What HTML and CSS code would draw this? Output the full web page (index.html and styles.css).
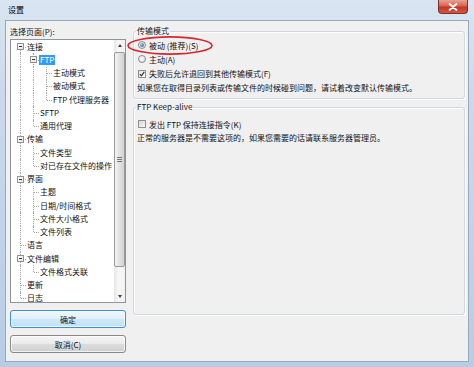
FILE: index.html
```html
<!DOCTYPE html>
<html lang="zh-CN">
<head>
<meta charset="utf-8">
<title>设置</title>
<link rel="stylesheet" href="styles.css">
</head>
<body>
<div class="window">
  <div class="titlebar">
    <span class="title">设置</span>
    <span class="close"><svg width="10" height="8" viewBox="0 0 10 8"><path d="M1.5 1 L8.5 7 M8.5 1 L1.5 7" stroke="#fff" stroke-width="1.8" stroke-linecap="round"/></svg></span>
  </div>
  <div class="client">
    <div class="left">
      <div class="pick-label">选择页面(P):</div>
      <div class="tree">
        <ul class="nodes">
          <li class="row"><span class="g bx first"><i class="pm"></i></span><span class="lbl">连接</span></li>
          <li class="row"><span class="g v"></span><span class="g bx"><i class="pm"></i></span><span class="lbl sel">FTP</span></li>
          <li class="row"><span class="g v"></span><span class="g v"></span><span class="g t"></span><span class="lbl">主动模式</span></li>
          <li class="row"><span class="g v"></span><span class="g v"></span><span class="g t"></span><span class="lbl">被动模式</span></li>
          <li class="row"><span class="g v"></span><span class="g v"></span><span class="g l"></span><span class="lbl">FTP 代理服务器</span></li>
          <li class="row"><span class="g v"></span><span class="g t"></span><span class="lbl">SFTP</span></li>
          <li class="row"><span class="g v"></span><span class="g l"></span><span class="lbl">通用代理</span></li>
          <li class="row"><span class="g bx"><i class="pm"></i></span><span class="lbl">传输</span></li>
          <li class="row"><span class="g v"></span><span class="g t"></span><span class="lbl">文件类型</span></li>
          <li class="row"><span class="g v"></span><span class="g l"></span><span class="lbl">对已存在文件的操作</span></li>
          <li class="row"><span class="g bx"><i class="pm"></i></span><span class="lbl">界面</span></li>
          <li class="row"><span class="g v"></span><span class="g t"></span><span class="lbl">主题</span></li>
          <li class="row"><span class="g v"></span><span class="g t"></span><span class="lbl">日期/时间格式</span></li>
          <li class="row"><span class="g v"></span><span class="g t"></span><span class="lbl">文件大小格式</span></li>
          <li class="row"><span class="g v"></span><span class="g l"></span><span class="lbl">文件列表</span></li>
          <li class="row"><span class="g t"></span><span class="lbl">语言</span></li>
          <li class="row"><span class="g bx"><i class="pm"></i></span><span class="lbl">文件编辑</span></li>
          <li class="row"><span class="g v"></span><span class="g l"></span><span class="lbl">文件格式关联</span></li>
          <li class="row"><span class="g t"></span><span class="lbl">更新</span></li>
          <li class="row"><span class="g l"></span><span class="lbl">日志</span></li>
        </ul>
        <div class="scrollbar">
          <div class="sb-btn"><span class="arrow up"></span></div>
          <div class="sb-track"><div class="sb-thumb"><span class="grip"></span></div></div>
          <div class="sb-btn"><span class="arrow down"></span></div>
        </div>
      </div>
      <button class="btn default">确定</button>
      <button class="btn">取消(C)</button>
    </div>
    <div class="right">
      <fieldset class="group g1">
        <legend>传输模式</legend>
        <div class="opt"><span class="radio on"></span>被动 (推荐)(S)</div>
        <div class="opt"><span class="radio"></span>主动(A)</div>
        <div class="opt"><span class="check on"><svg width="6" height="6" viewBox="0 0 6 6"><path d="M0.8 3.2 L2.4 4.8 L5.3 0.9" fill="none" stroke="#253545" stroke-width="1.2"/></svg></span>失败后允许退回到其他传输模式(F)</div>
        <p class="note">如果您在取得目录列表或传输文件的时候碰到问题，请试着改变默认传输模式。</p>
      </fieldset>
      <fieldset class="group g2">
        <legend>FTP Keep-alive</legend>
        <div class="opt"><span class="check"></span>发出 FTP 保持连接指令(K)</div>
        <p class="note">正常的服务器是不需要这项的，如果您需要的话请联系服务器管理员。</p>
      </fieldset>
    </div>
  </div>
  <svg class="mark" width="90" height="22" viewBox="0 0 90 22"><ellipse cx="44" cy="10.5" rx="42" ry="8.6" fill="none" stroke="#d8262a" stroke-width="1.6"/></svg>
</div>
</body>
</html>
```
FILE: styles.css
```css
* { box-sizing: border-box; }
html, body { margin: 0; padding: 0; }
body {
  width: 474px;
  height: 367px;
  overflow: hidden;
  font-family: "Noto Sans CJK SC", "Noto Sans", sans-serif;
  font-size: 8px;
  color: #111;
}
.window {
  position: relative;
  width: 474px;
  height: 367px;
  display: flex;
  flex-direction: column;
  background: linear-gradient(180deg, #d9e5f1 0, #cbdaeb 25%, #b7cde5 100%);
}
.titlebar {
  height: 20px;
  flex: none;
  display: flex;
  justify-content: space-between;
  align-items: flex-start;
  padding: 0 6px 0 8px;
}
.title {
  line-height: 20px;
  font-size: 8px;
  color: #000;
}
.close {
  width: 30px;
  height: 14px;
  display: flex;
  align-items: center;
  justify-content: center;
  border: 1px solid #7a3128;
  border-top: none;
  border-radius: 0 0 4px 4px;
  background: linear-gradient(180deg, #eaa192 0, #d8634f 45%, #c2362a 55%, #d4553f 100%);
}
.client {
  flex: 1;
  margin: 0 5px 5px 5px;
  border: 1px solid #97a9bf;
  background: #f0f0f0;
  display: flex;
  gap: 7px;
  padding: 5px 3px 4px 4px;
}
.left {
  width: 116px;
  flex: none;
  display: flex;
  flex-direction: column;
}
.pick-label {
  height: 13px;
  line-height: 11px;
}
.tree {
  height: 264px;
  border: 1px solid #8f949b;
  background: #fff;
  display: flex;
}
.nodes {
  list-style: none;
  margin: 0;
  padding: 0 0 0 2px;
  flex: 1;
  overflow: hidden;
}
.row {
  display: flex;
  align-items: center;
  height: 13.25px;
  white-space: nowrap;
}
.g {
  position: relative;
  width: 13px;
  height: 100%;
  flex: none;
}
.g::before, .g::after { content: ""; position: absolute; }
.g.v::before, .g.t::before, .g.bx::before {
  left: 7px; top: 0; bottom: 0;
  border-left: 1px dotted #a8a8a8;
}
.g.bx.first::before { top: 50%; }
.g.l::before {
  left: 7px; top: 0; height: 50%;
  border-left: 1px dotted #a8a8a8;
}
.g.t::after, .g.l::after, .g.bx::after {
  left: 8px; right: 0; top: 50%;
  border-top: 1px dotted #a8a8a8;
}
.pm {
  position: absolute;
  left: 4px;
  top: 50%;
  margin-top: -3.5px;
  width: 7px;
  height: 7px;
  border: 1px solid #939393;
  background: linear-gradient(135deg, #fff, #e2e2e2);
  z-index: 1;
}
.pm::after {
  content: "";
  position: absolute;
  left: 1px;
  right: 1px;
  top: 2px;
  border-top: 1px solid #333;
}
.lbl {
  display: inline-block;
  line-height: 10px;
  padding: 0 1px;
}
.lbl.sel {
  background: #3399ff;
  color: #fff;
}
.scrollbar {
  width: 11px;
  flex: none;
  display: flex;
  flex-direction: column;
  background: linear-gradient(90deg, #e6e6e6, #f7f7f7 40%, #f1f1f1);
}
.sb-btn {
  height: 11px;
  display: flex;
  align-items: center;
  justify-content: center;
  flex: none;
}
.arrow {
  width: 0; height: 0;
  border-left: 2.5px solid transparent;
  border-right: 2.5px solid transparent;
}
.arrow.up { border-bottom: 3px solid #404040; }
.arrow.down { border-top: 3px solid #404040; }
.sb-track {
  flex: 1;
  padding-top: 1px;
}
.sb-thumb {
  height: 215px;
  border: 1px solid #9a9a9a;
  border-radius: 2px;
  background: linear-gradient(90deg, #f4f4f4, #e1e1e1 50%, #d2d2d2);
  display: flex;
  align-items: center;
  justify-content: center;
}
.grip {
  width: 5px;
  height: 5px;
  border-top: 1px solid #777;
  border-bottom: 1px solid #777;
  background: linear-gradient(#777, #777) center / 100% 1px no-repeat;
}
.btn {
  font: inherit;
  color: #111;
  height: 18px;
  margin: 7px 0 0 0;
  padding: 0;
  border-radius: 3px;
  border: 1px solid #8a8a8a;
  background: linear-gradient(180deg, #f6f6f6 0, #ebebeb 48%, #dcdcdc 52%, #d0d0d0 100%);
  box-shadow: inset 0 0 0 1px rgba(255,255,255,0.7);
}
.btn.default {
  border-color: #3c8fd0;
  background: linear-gradient(180deg, #eef7fd 0, #e0f0fb 48%, #cde8f8 52%, #c1e2f6 100%);
}
.right {
  flex: 1;
  display: flex;
  flex-direction: column;
}
.group {
  margin: 0;
  min-width: 0;
  border: 1px solid #d0d7de;
  border-radius: 3px;
  box-shadow: inset 1px 1px 0 #fff, 1px 1px 0 #fff;
  padding: 2px 3px 3px 3px;
}
.group legend {
  padding: 0 1px;
  margin-left: -1px;
  line-height: 10px;
}
.g2 {
  margin-top: 3px;
  padding-top: 5px;
  height: 213px;
}
.opt {
  display: flex;
  align-items: center;
  height: 14.3px;
  white-space: nowrap;
}
.note {
  margin: 0;
  line-height: 14.3px;
  white-space: nowrap;
}
.radio {
  width: 8px;
  height: 8px;
  margin: 0 3px 0 1px;
  border: 1px solid #8a8a8a;
  border-radius: 50%;
  background: radial-gradient(circle at 40% 40%, #fdfdfd, #d8d8d8);
  display: flex;
  align-items: center;
  justify-content: center;
  flex: none;
}
.radio.on::after {
  content: "";
  width: 4px;
  height: 4px;
  border-radius: 50%;
  background: radial-gradient(circle at 35% 35%, #8fc4ee, #1e5a94);
}
.check {
  width: 8px;
  height: 8px;
  margin: 0 3px 0 1px;
  border: 1px solid #8e8f8f;
  background: linear-gradient(135deg, #d6d6d6, #f8f8f8);
  display: flex;
  align-items: center;
  justify-content: center;
  flex: none;
}
.check.on { background: linear-gradient(135deg, #e4e4e4, #ffffff); }
.mark {
  position: absolute;
  left: 126px;
  top: 35px;
}
```
